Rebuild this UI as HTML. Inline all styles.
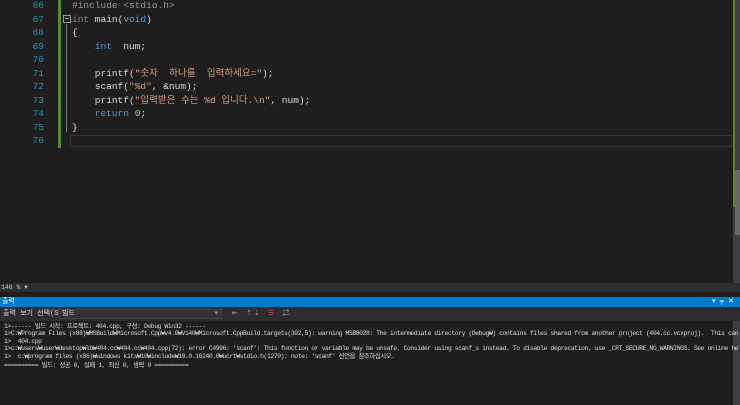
<!DOCTYPE html><html><head><meta charset="utf-8"><style>
body{margin:0;width:740px;height:405px;background:#1e1e1e;overflow:hidden;position:relative;font-family:"Liberation Mono","Noto Sans CJK KR",monospace}
.a{position:absolute}
.ln{position:absolute;left:22px;width:22px;text-align:right;color:#2b91af;font-size:9.5px;line-height:12px;height:12px}
.cd{position:absolute;left:72px;color:#dcdcdc;font-size:9.5px;white-space:pre;line-height:12px;height:12px}
.k{color:#569cd6}.s{color:#d69d85}.p{color:#9b9b9b}.n{color:#b5cea8}
.o{position:absolute;left:4px;color:#dcdcdc;font-size:6.4px;white-space:pre;letter-spacing:-0.42px;line-height:8px;height:8px}
</style></head><body>
<div class="a" style="left:58px;top:0;width:3px;height:148px;background:#5a8a2a"></div>
<div class="a" style="left:70px;top:135px;width:662px;height:12px;border:1px solid #333;box-sizing:border-box"></div>
<div class="a" style="left:733px;top:0;width:7px;height:283px;background:#3e3e42"></div>
<div class="a" style="left:735px;top:170px;width:5px;height:65px;background:#686868"></div>
<div class="a" style="left:733px;top:0;width:2px;height:207px;background:#5a8a2a"></div>
<div class="a" style="left:63px;top:15px;width:6px;height:6px;border:1px solid #999"></div>
<div class="a" style="left:65px;top:18px;width:4px;height:1px;background:#999"></div>
<div class="a" style="left:66px;top:24px;width:1px;height:108px;background:#777"></div>
<div class="ln" style="top:0">66</div><div class="cd" style="top:0"><span class="p">#include &lt;stdio.h&gt;</span></div>
<div class="ln" style="top:13.5px">67</div><div class="cd" style="top:13.5px"><span class="k">int</span> main(<span class="k">void</span>)</div>
<div class="ln" style="top:27px">68</div><div class="cd" style="top:27px">{</div>
<div class="ln" style="top:40.5px">69</div><div class="cd" style="top:40.5px">    <span class="k">int</span>  num;</div>
<div class="ln" style="top:54px">70</div>
<div class="ln" style="top:67.5px">71</div><div class="cd" style="top:67.5px">    printf(<span class="s">"숫자  하나를  입력하세요="</span>);</div>
<div class="ln" style="top:81px">72</div><div class="cd" style="top:81px">    scanf(<span class="s">"%d"</span>, &amp;num);</div>
<div class="ln" style="top:94.5px">73</div><div class="cd" style="top:94.5px">    printf(<span class="s">"입력받은 수는 %d 입니다.\n"</span>, num);</div>
<div class="ln" style="top:108px">74</div><div class="cd" style="top:108px">    <span class="k">return</span> <span class="n">0</span>;</div>
<div class="ln" style="top:121.5px">75</div><div class="cd" style="top:121.5px">}</div>
<div class="ln" style="top:135px">76</div>
<div class="a" style="left:0;top:283px;width:740px;height:9px;background:#2d2d30"></div>
<div class="a" style="left:1px;top:283px;color:#ccc;font-size:6.5px;line-height:9px">146 %  ▾</div>
<div class="a" style="left:0;top:297px;width:740px;height:10px;background:#007acc"></div>
<div class="a" style="left:2px;top:297px;color:#fff;font-size:7px;line-height:10px">출력</div>
<div class="a" style="left:712px;top:297px;color:#fff;font-size:7px;line-height:10px">▾ ╤ ✕</div>
<div class="a" style="left:0;top:307px;width:740px;height:14px;background:#2d2d30"></div>
<div class="a" style="left:3px;top:309px;color:#ddd;font-size:7px;line-height:10px">출력 보기 선택(S):</div>
<div class="a" style="left:58px;top:309px;width:164px;height:10px;background:#333337;border:1px solid #3f3f46;box-sizing:border-box;color:#ddd;font-size:7px;padding-left:3px;line-height:9px">빌드<span style="float:right;color:#999;padding-right:3px">▾</span></div>
<div class="a" style="left:232px;top:309px;color:#aaa;font-size:7px;letter-spacing:2px;line-height:10px">⇤ ⇡⇣ <span style="color:#e05050">☰</span> ⇄</div>
<div class="a" style="left:733px;top:321px;width:7px;height:84px;background:#3e3e42"></div>
<div class="o" style="top:323px">1&gt;------ 빌드 시작: 프로젝트: 404.cpp, 구성: Debug Win32 ------</div>
<div class="o" style="top:330px">1&gt;C:₩Program Files (x86)₩MSBuild₩Microsoft.Cpp₩v4.0₩V140₩Microsoft.CppBuild.targets(392,5): warning MSB8028: The intermediate directory (Debug₩) contains files shared from another project (404.cc.vcxproj).  This can lead to</div>
<div class="o" style="top:337.5px">1&gt;  404.cpp</div>
<div class="o" style="top:344.5px">1&gt;c:₩users₩user₩desktop₩lb₩404.cc₩404.cc₩404.cpp(72): error C4996: 'scanf': This function or variable may be unsafe. Consider using scanf_s instead. To disable deprecation, use _CRT_SECURE_NO_WARNINGS. See online help for d</div>
<div class="o" style="top:352.5px">1&gt;  c:₩program files (x86)₩windows kits₩10₩include₩10.0.10240.0₩ucrt₩stdio.h(1270): note: 'scanf' 선언을 참조하십시오.</div>
<div class="o" style="top:362px">========== 빌드: 성공 0, 실패 1, 최신 0, 생략 0 ==========</div>
</body></html>
